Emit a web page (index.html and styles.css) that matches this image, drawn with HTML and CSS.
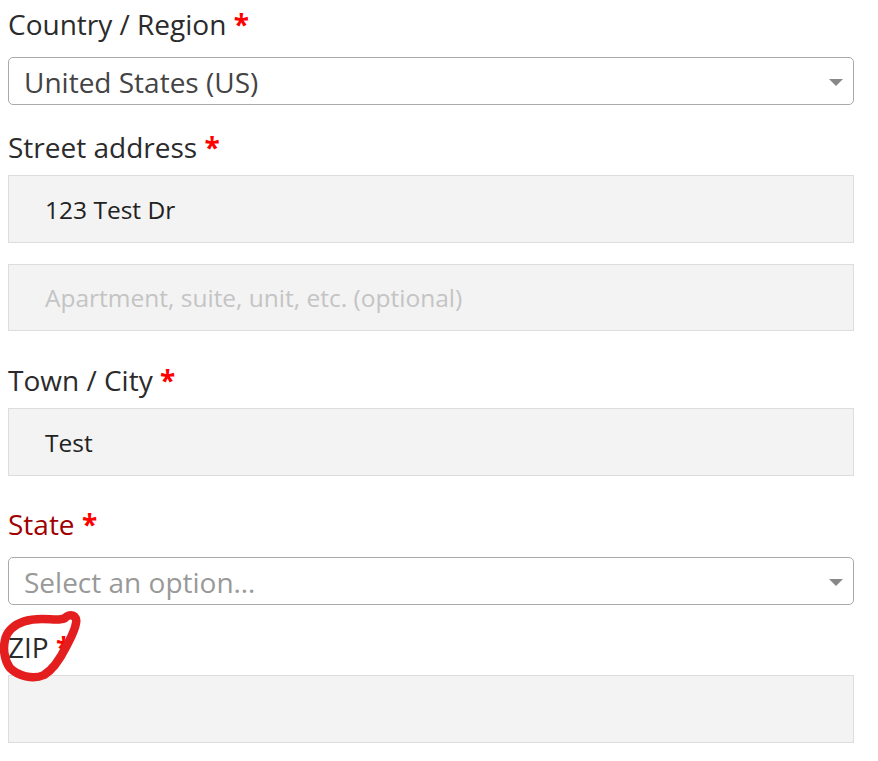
FILE: index.html
```html
<!DOCTYPE html>
<html lang="en">
<head>
<meta charset="utf-8">
<title>Billing form</title>
<link rel="stylesheet" href="styles.css">
</head>
<body>
<form class="form">
  <div class="field field-select">
    <label class="label">Country / Region <abbr class="req">*</abbr></label>
    <div class="select">
      <span class="select-text">United States (US)</span>
      <span class="arrow"></span>
    </div>
  </div>

  <div class="field">
    <label class="label">Street address <abbr class="req">*</abbr></label>
    <div class="input"><span class="value">123 Test Dr</span></div>
    <div class="input input-second"><span class="placeholder">Apartment, suite, unit, etc. (optional)</span></div>
  </div>

  <div class="field field-tight">
    <label class="label">Town / City <abbr class="req">*</abbr></label>
    <div class="input"><span class="value">Test</span></div>
  </div>

  <div class="field field-select">
    <label class="label label-error">State <abbr class="req">*</abbr></label>
    <div class="select">
      <span class="select-text select-placeholder">Select an option…</span>
      <span class="arrow"></span>
    </div>
  </div>

  <div class="field field-zip">
    <label class="label">ZIP <abbr class="req">*</abbr></label>
    <div class="input"></div>
    <svg class="scribble" width="90" height="80" viewBox="0 0 90 80" xmlns="http://www.w3.org/2000/svg">
      <path d="M 11 24 C 18 17, 30 14, 42 14 C 52 14, 60 16, 65 13 C 69 8, 78 10, 76 18 C 75 26, 70 34, 66 42 C 61 52, 54 64, 44 70 C 33 75, 18 71, 10 63 C 4 55, 3 43, 5 35 C 6 30, 8 27, 11 24 Z" fill="none" stroke="#e41e1e" stroke-width="8.5" stroke-linejoin="round" stroke-linecap="round"/>
    </svg>
  </div>
</form>
</body>
</html>
```

FILE: styles.css
```css
html, body {
  margin: 0;
  padding: 0;
  background: #ffffff;
}

body {
  font-family: "Open Sans", "Noto Sans", "Liberation Sans", sans-serif;
  color: #2b2b2b;
}

.form {
  width: 846px;
  padding: 2px 0 0 8px;
  display: flex;
  flex-direction: column;
}

.field {
  display: flex;
  flex-direction: column;
  margin-bottom: 27px;
}

.field-tight {
  margin-bottom: 26px;
}

.field-select {
  margin-bottom: 20px;
}

.field-zip {
  position: relative;
}

.label {
  font-size: 28px;
  line-height: 44px;
  color: #2b2b2b;
  margin-bottom: 6px;
}

.label-error {
  color: #a00000;
}

.req {
  color: #ff0000;
  font-weight: 700;
  text-decoration: none;
  border: none;
}

.select {
  box-sizing: border-box;
  height: 48px;
  margin-top: 5px;
  border: 1px solid #aaaaaa;
  border-radius: 5px;
  display: flex;
  align-items: center;
  justify-content: space-between;
  padding: 2px 10px 0 15px;
}

.select-text {
  font-size: 28px;
  color: #444444;
}

.select-placeholder {
  color: #999999;
}

.arrow {
  width: 0;
  height: 0;
  border-left: 7.5px solid transparent;
  border-right: 7.5px solid transparent;
  border-top: 7px solid #888888;
}

.input {
  box-sizing: border-box;
  height: 68px;
  background: #f3f3f3;
  border: 1px solid #dddddd;
  display: flex;
  align-items: center;
  padding-left: 36px;
}

.input-second {
  height: 67px;
  margin-top: 21px;
}

.value {
  font-size: 24.5px;
  color: #222222;
}

.placeholder {
  font-size: 24.5px;
  color: #c4c4c4;
}

.scribble {
  position: absolute;
  left: -8px;
  top: -20px;
}
```
